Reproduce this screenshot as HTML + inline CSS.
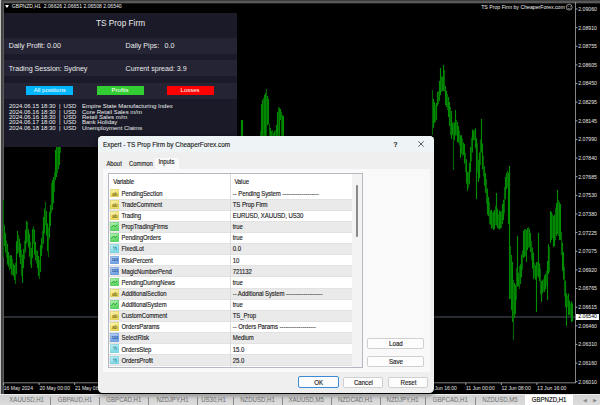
<!DOCTYPE html>
<html><head><meta charset="utf-8"><title>TS Prop Firm</title>
<style>
html,body{margin:0;padding:0;background:#000;}
body{width:600px;height:405px;position:relative;overflow:hidden;font-family:"Liberation Sans",sans-serif;color:#fff;}
div,span{box-sizing:border-box;}
.abs{position:absolute;}
#chart{position:absolute;left:0;top:0;}
.pl{position:absolute;left:578.2px;font-size:5.2px;line-height:7px;height:7px;color:#e6e6e6;white-space:nowrap;transform:scaleY(1.12);transform-origin:0 5.6px;margin-top:.9px;}
.tl{position:absolute;top:384.8px;font-size:5.05px;line-height:7px;height:7px;color:#e6e6e6;white-space:nowrap;transform:scaleY(1.12);transform-origin:0 5.6px;}
#ttl{position:absolute;left:11.8px;top:3px;font-size:5.1px;line-height:7px;color:#f0f0f0;white-space:pre;transform:scaleY(1.15);transform-origin:0 5.6px;}
#tri{position:absolute;left:4.7px;top:5px;width:0;height:0;border-left:2.3px solid transparent;border-right:2.3px solid transparent;border-top:3.1px solid #fff;}
#cr{position:absolute;right:35.2px;top:3.9px;font-size:5.2px;line-height:7px;color:#f0f0f0;white-space:nowrap;transform:scaleY(1.12);transform-origin:0 5.6px;}
#panel{position:absolute;left:4px;top:12.7px;width:232.8px;height:134px;background:#1a1a28;color:#ececec;}
#pin{position:absolute;left:0;top:-.3px;width:100%;height:100%;}
.band{position:absolute;left:0;width:100%;background:#242435;}
.pt{position:absolute;font-size:7.1px;line-height:9px;white-space:nowrap;}
.btn{position:absolute;top:73.4px;height:9.3px;font-size:6px;line-height:9.3px;text-align:center;color:#fff;}
.nw{position:absolute;left:-4px;width:240px;height:7px;font-size:6px;line-height:7px;}
.nw span{position:absolute;top:0;white-space:nowrap;}
#tabs{position:absolute;left:0;top:393.6px;width:600px;height:11.4px;background:linear-gradient(#d2d2d2,#dcdcdc);border-top:1.2px solid #ececec;font-size:6.05px;color:#707070;}
.tb{position:absolute;top:0;height:10.2px;line-height:11.6px;text-align:center;white-space:nowrap;transform:scaleY(1.16);transform-origin:50% 7.6px;}
.ts{position:absolute;top:2px;width:.8px;height:8.2px;background:#8c8c8c;}
#atab{position:absolute;left:525px;top:0;width:48.3px;height:10.2px;background:#fff;color:#111;-webkit-text-stroke:.15px #111;line-height:11.6px;text-align:center;}
#dlg{position:absolute;left:98.4px;top:136.3px;width:335.6px;height:256.4px;background:#efefef;border-radius:4.5px;overflow:hidden;color:#1a1a1a;box-shadow:0 1.5px 5px rgba(0,0,0,.5);-webkit-text-stroke:.12px #1a1a1a;}
#dt{position:absolute;left:0;top:0;width:100%;height:16.2px;background:#eef3f5;}
#dt .t{position:absolute;left:4.6px;top:4.4px;font-size:6.4px;line-height:8px;white-space:nowrap;transform:scaleY(1.15);transform-origin:0 6.6px;}
#pane{position:absolute;left:4.6px;top:32.7px;width:327px;height:202.7px;background:#f9f9f9;}
.tab{position:absolute;font-size:5.9px;line-height:8px;white-space:nowrap;color:#1a1a1a;transform:scaleY(1.2);transform-origin:0 6.4px;}
#list{position:absolute;left:10px;top:37.1px;width:254.4px;height:194.2px;background:#fff;border:.9px solid #b4b8c2;overflow:hidden;}
.rw{position:absolute;left:0;width:243px;height:11.12px;border-bottom:.6px solid #e2e2e2;background:#fff;}
.rw.g{background:#eaeaea;}
.rw span{position:absolute;white-space:nowrap;}
.nm{left:12.1px;top:1.4px;font-size:6px;line-height:8px;letter-spacing:-.08px;transform:scaleY(1.2);transform-origin:0 6.4px;}
.vl{left:123.4px;top:1.4px;font-size:6px;line-height:8px;letter-spacing:-.08px;transform:scaleY(1.2);transform-origin:0 6.4px;}
.ic{left:.9px;top:.3px;width:8.8px;height:8.6px;border-radius:1.2px;overflow:hidden;}
.ic i{-webkit-text-stroke:0;position:absolute;left:0;top:0;width:100%;text-align:center;font-style:normal;font-size:5px;line-height:8.6px;font-weight:bold;letter-spacing:-.2px;}
.ic svg{position:absolute;left:0;top:0;}
.ab{background:linear-gradient(160deg,#fcf8c0,#ecdc60 70%);box-shadow:inset 0 0 0 .4px #d6c65a;}
.ab i{color:#857420;top:.9px}
.bo{background:linear-gradient(160deg,#c4f7c4,#62d868 70%);box-shadow:inset 0 0 0 .4px #58c45e;}
.db{background:linear-gradient(160deg,#d2f6fa,#84dbe8 70%);box-shadow:inset 0 0 0 .4px #70c8d6;}
.db i{color:#2a8796;}
.in{background:linear-gradient(160deg,#c0d8f6,#78a6e4 70%);box-shadow:inset 0 0 0 .4px #6c98d6;}
.in i{color:#1d4c9c;font-size:4.2px;top:.6px}
.bx{display:inline-block;transform:scaleY(1.18);transform-origin:50% 62%;letter-spacing:-.05px;}
.hd{font-size:6px;line-height:8px;letter-spacing:-.08px;transform:scaleY(1.2);transform-origin:0 6.4px;}
.bt{position:absolute;background:#fdfdfd;border:.7px solid #d0d0d0;border-radius:2px;font-size:6.2px;text-align:center;color:#1a1a1a;white-space:nowrap;}
</style></head><body>
<svg id="chart" width="600" height="405" viewBox="0 0 600 405">
<rect x="0" y="0" width="600" height="1" fill="#3c3c3c"/>
<rect x="0" y="1" width="600" height="1" fill="#565656"/>
<rect x="0" y="2" width="600" height="1" fill="#5a5a5a"/>
<rect x="0" y="3" width="600" height=".3" fill="#666"/>
<rect x="0" y="0" width="1.25" height="405" fill="#c6c6c6"/>
<rect x="1.25" y="0.6" width="1.9" height="405" fill="#474747"/>
<rect x="3.15" y="3" width=".85" height="391" fill="#6a6a6a"/>
<rect x="4" y="316.1" width="571" height="1.7" fill="#2f353c"/>
<path d="M4.5 225.5V246.1M5.5 233.2V252.5M7.5 244.1V264.5M8.5 251.9V266.4M10.5 255.1V268.7M11.5 255.6V274.5M13.5 263.6V276.0M14.5 265.0V280.0M16.5 241.2V274.3M17.5 231.0V253.7M19.5 238.6V257.0M20.5 243.4V264.1M22.5 254.6V283.0M23.5 248.9V267.9M25.5 229.9V252.5M26.5 220.7V243.6M28.5 229.3V247.3M29.5 233.7V256.7M31.5 247.9V268.0M32.5 229.0V258.0M34.5 229.6V254.6M35.5 242.1V260.2M37.5 251.0V267.9M38.5 256.0V276.1M40.5 245.0V272.0M41.5 238.0V256.1M43.5 216.9V243.7M44.5 208.6V233.6M46.5 211.0V235.6M47.5 223.6V251.2M49.5 212.0V238.3M50.5 205.0V226.0M52.5 180.0V210.0M53.5 177.0V203.0M55.5 150.0V180.0M56.5 140.0V177.0M58.5 140.0V169.0M59.5 140.0V165.0M241.5 120.0V140.0M242.5 120.0V140.0M261.5 104.0V140.0M262.5 100.0V140.0M264.5 95.0V140.0M265.5 93.0V140.0M267.5 96.0V125.0M268.5 99.0V124.0M270.5 128.0V140.0M271.5 131.0V140.0M273.5 133.0V140.0M274.5 131.0V140.0M276.5 125.0V140.0M277.5 112.0V140.0M279.5 108.0V140.0M280.5 109.0V120.0M282.5 115.0V140.0M283.5 116.0V140.0M433.5 99.0V128.0M434.5 102.0V123.0M436.5 103.0V120.0M437.5 92.0V106.0M439.5 81.0V101.0M440.5 68.0V95.0M442.5 77.0V91.0M443.5 65.0V91.0M445.5 86.0V105.0M446.5 91.0V107.0M448.5 97.0V117.0M449.5 102.0V126.0M451.5 111.0V139.0M452.5 122.9V134.9M454.5 122.4V139.9M455.5 110.0V135.5M457.5 121.9V142.0M458.5 126.1V142.8M460.5 135.2V158.0M461.5 135.3V153.8M463.5 142.6V154.9M464.5 143.9V163.4M466.5 159.2V183.6M467.5 171.8V190.7M469.5 163.0V184.3M470.5 147.1V171.9M472.5 129.5V152.5M473.5 130.7V140.3M475.5 128.3V148.2M476.5 138.2V199.0M478.5 159.8V182.0M479.5 152.4V178.2M481.5 119.0V152.6M482.5 143.4V169.2M484.5 166.2V185.7M485.5 172.9V193.1M487.5 188.6V214.6M488.5 196.9V216.2M490.5 210.6V224.6M491.5 209.8V228.4M493.5 211.5V230.1M494.5 209.9V229.0M496.5 193.0V225.4M497.5 208.8V228.2M499.5 210.5V229.5M500.5 211.4V228.6M502.5 204.1V224.1M503.5 199.8V219.9M505.5 177.1V199.3M506.5 172.9V189.3M508.5 172.6V224.0M509.5 166.0V299.0M511.5 255.0V310.0M512.5 262.0V322.0M514.5 283.0V318.0M515.5 285.0V314.0M517.5 236.0V286.5M518.5 272.7V286.6M520.5 264.2V283.9M521.5 254.6V277.3M523.5 231.0V258.0M524.5 229.0V257.0M526.5 230.0V262.0M527.5 228.0V250.0M529.5 229.0V247.0M530.5 233.0V252.0M532.5 247.6V268.4M533.5 252.8V279.1M535.5 265.3V279.8M536.5 262.0V312.0M538.5 233.0V277.6M539.5 263.6V281.3M541.5 281.0V302.0M542.5 280.3V293.6M544.5 275.3V291.9M545.5 273.7V289.5M547.5 260.9V300.0M548.5 244.1V274.0M550.5 211.0V243.0M551.5 212.0V240.0M553.5 216.0V247.0M554.5 215.0V246.0M556.5 203.0V236.0M557.5 190.0V234.0M559.5 202.0V240.0M560.5 204.0V240.0M562.5 242.4V270.7M563.5 252.1V279.4M565.5 280.8V307.1M566.5 293.3V326.0M568.5 293.6V315.3M569.5 300.5V314.7M571.5 301.6V322.2M572.5 303.4V321.3" stroke="#008c00" stroke-width="1.15" fill="none"/><path d="M3.5 200.0V257.0M6.5 240.5V257.8M9.5 256.0V270.3M12.5 258.8V275.6M15.5 262.7V284.0M18.5 234.9V252.3M21.5 249.8V275.9M24.5 240.8V259.3M27.5 222.0V241.7M30.5 241.7V264.7M33.5 226.0V244.0M36.5 250.0V263.4M39.5 259.7V279.0M42.5 230.5V248.4M45.5 202.0V225.1M48.5 227.2V257.0M51.5 183.0V213.0M54.5 172.0V192.0M57.5 140.0V173.0M60.5 140.0V153.0M260.5 131.0V140.0M263.5 98.0V140.0M266.5 89.0V140.0M269.5 124.0V140.0M272.5 130.0V140.0M275.5 130.0V140.0M278.5 107.0V140.0M281.5 112.0V140.0M432.5 90.0V135.0M435.5 105.0V122.0M438.5 91.0V104.0M441.5 76.0V92.0M444.5 70.0V92.0M447.5 94.0V110.0M450.5 107.0V135.0M453.5 122.0V170.0M456.5 120.0V135.5M459.5 130.4V145.5M462.5 138.8V156.2M465.5 152.9V171.9M468.5 171.7V188.1M471.5 137.8V161.6M474.5 129.4V140.3M477.5 143.2V172.7M480.5 139.6V165.0M483.5 155.8V176.5M486.5 178.9V203.8M489.5 201.7V224.3M492.5 212.6V228.0M495.5 205.7V225.0M498.5 214.2V229.1M501.5 211.3V228.0M504.5 186.9V213.5M507.5 170.4V187.2M510.5 246.0V299.0M513.5 280.0V340.0M516.5 268.0V300.0M519.5 266.1V289.1M522.5 250.4V269.8M525.5 229.0V256.0M528.5 227.0V248.0M531.5 240.9V260.1M534.5 262.9V277.3M537.5 261.9V276.1M540.5 268.5V294.8M543.5 279.0V291.4M546.5 270.7V285.9M549.5 247.0V272.0M552.5 214.0V238.0M555.5 208.0V240.0M558.5 200.0V236.0M561.5 232.0V255.0M564.5 266.8V296.4M567.5 295.7V307.3M570.5 303.5V316.2" stroke="#006400" stroke-width="1.15" fill="none"/>

<path d="M575.5 2V383M3.4 382.8H576" stroke="#9c9c9c" stroke-width=".85" fill="none"/>
<path d="M575.5 9.0h2M575.5 27.6h2M575.5 46.3h2M575.5 64.9h2M575.5 83.5h2M575.5 102.2h2M575.5 120.8h2M575.5 139.4h2M575.5 158.1h2M575.5 176.7h2M575.5 195.4h2M575.5 214.0h2M575.5 232.6h2M575.5 251.3h2M575.5 269.9h2M575.5 288.5h2M575.5 307.2h2M575.5 325.8h2M575.5 344.4h2M575.5 363.1h2M575.5 381.7h2M3.6 383v2M39.1 383v2M74.7 383v2M110.2 383v2M145.8 383v2M181.3 383v2M216.9 383v2M252.4 383v2M288.0 383v2M323.6 383v2M359.1 383v2M394.6 383v2M430.2 383v2M465.8 383v2M501.3 383v2M536.9 383v2" stroke="#c8c8c8" stroke-width=".8" fill="none"/>
<circle cx="569.2" cy="7.2" r="2.9" fill="none" stroke="#e8e8e8" stroke-width=".6"/>
<path d="M567.7 8.1Q569.2 9.6 570.7 8.1" stroke="#e8e8e8" stroke-width=".5" fill="none"/>
<circle cx="568.2" cy="6.4" r=".45" fill="#e8e8e8"/><circle cx="570.2" cy="6.4" r=".45" fill="#e8e8e8"/>
</svg>
<div id="tri"></div>
<div id="ttl">GBPNZD,H1  2.06626 2.06651 2.06508 2.06540</div>
<div id="cr">TS Prop Firm by CheaperForex.com</div>
<div class="pl" style="top:5.1px">2.09060</div><div class="pl" style="top:23.7px">2.08910</div><div class="pl" style="top:42.4px">2.08755</div><div class="pl" style="top:61.0px">2.08605</div><div class="pl" style="top:79.6px">2.08450</div><div class="pl" style="top:98.3px">2.08295</div><div class="pl" style="top:116.9px">2.08145</div><div class="pl" style="top:135.5px">2.07990</div><div class="pl" style="top:154.2px">2.07840</div><div class="pl" style="top:172.8px">2.07685</div><div class="pl" style="top:191.5px">2.07530</div><div class="pl" style="top:210.1px">2.07380</div><div class="pl" style="top:228.7px">2.07225</div><div class="pl" style="top:247.4px">2.07075</div><div class="pl" style="top:266.0px">2.06920</div><div class="pl" style="top:284.6px">2.06765</div><div class="pl" style="top:303.3px">2.06615</div><div class="pl" style="top:321.9px">2.06460</div><div class="pl" style="top:340.5px">2.06310</div><div class="pl" style="top:359.2px">2.06160</div><div class="pl" style="top:377.8px">2.06010</div>
<div class="abs" style="left:575.9px;top:314px;width:22.9px;height:5.8px;background:#fff;"></div>
<div class="pl" style="top:312.6px;color:#000">2.06540</div>
<div class="tl" style="left:3.8px">16 May 2024</div><div class="tl" style="left:39.4px">20 May 00:00</div><div class="tl" style="left:74.9px">21 May 08:00</div><div class="tl" style="left:110.4px">22 May 16:00</div><div class="tl" style="left:146.0px">24 May 00:00</div><div class="tl" style="left:181.5px">27 May 08:00</div><div class="tl" style="left:217.1px">28 May 16:00</div><div class="tl" style="left:252.6px">30 May 00:00</div><div class="tl" style="left:288.2px">31 May 08:00</div><div class="tl" style="left:323.8px">3 Jun 16:00</div><div class="tl" style="left:359.3px">5 Jun 00:00</div><div class="tl" style="left:394.8px">6 Jun 08:00</div><div class="tl" style="left:430.4px">7 Jun 16:00</div><div class="tl" style="left:465.9px">11 Jun 00:00</div><div class="tl" style="left:501.5px">12 Jun 08:00</div><div class="tl" style="left:537.1px">13 Jun 16:00</div>
<div id="panel"><div id="pin">
<div class="band" style="top:25.3px;height:16px"></div>
<div class="band" style="top:47.4px;height:16.6px"></div>
<div class="band" style="top:70.3px;height:16.2px"></div>
<div class="pt" style="left:92px;top:6.2px;font-size:8.25px;line-height:10px">TS Prop Firm</div>
<div class="pt" style="left:4.8px;top:29.7px">Daily Profit: 0.00</div>
<div class="pt" style="left:121.6px;top:29.7px">Daily Pips:&nbsp;&nbsp;&thinsp;0.0</div>
<div class="pt" style="left:4.8px;top:52.3px">Trading Session: Sydney</div>
<div class="pt" style="left:121.6px;top:52.3px">Current spread: 3.9</div>
<div class="btn" style="left:22.3px;width:47px;background:#00b6ff">All positions</div>
<div class="btn" style="left:92.6px;width:47px;background:#32cd32">Profits</div>
<div class="btn" style="left:162.6px;width:47px;background:#ff0000">Losses</div>
<div class="nw" style="top:90.70px"><span style="left:9px">2024.06.15 18:30</span><span style="left:59px">|</span><span style="left:63.6px">USD</span><span style="left:82px">Empire State Manufacturing Index</span></div><div class="nw" style="top:96.13px"><span style="left:9px">2024.06.16 18:30</span><span style="left:59px">|</span><span style="left:63.6px">USD</span><span style="left:82px">Core Retail Sales m/m</span></div><div class="nw" style="top:101.56px"><span style="left:9px">2024.06.16 18:30</span><span style="left:59px">|</span><span style="left:63.6px">USD</span><span style="left:82px">Retail Sales m/m</span></div><div class="nw" style="top:106.99px"><span style="left:9px">2024.06.17 18:00</span><span style="left:59px">|</span><span style="left:63.6px">USD</span><span style="left:82px">Bank Holiday</span></div><div class="nw" style="top:112.42px"><span style="left:9px">2024.06.18 18:30</span><span style="left:59px">|</span><span style="left:63.6px">USD</span><span style="left:82px">Unemployment Claims</span></div>
</div></div>
<div id="tabs"><div class="tb" style="left:4.3px;width:44.7px">XAUUSD,H1</div><div class="ts" style="left:50.3px"></div><div class="tb" style="left:52.3px;width:45.4px">GBPAUD,H1</div><div class="ts" style="left:98.6px"></div><div class="tb" style="left:101.0px;width:45.7px">GBPCAD,H1</div><div class="ts" style="left:147.9px"></div><div class="tb" style="left:150.0px;width:45.0px">NZDJPY,H1</div><div class="ts" style="left:196.6px"></div><div class="tb" style="left:196.0px;width:35.0px">US30,H1</div><div class="ts" style="left:232.9px"></div><div class="tb" style="left:235.0px;width:45.0px">NZDUSD,H1</div><div class="ts" style="left:281.9px"></div><div class="tb" style="left:283.3px;width:45.7px">XAUUSD,M5</div><div class="ts" style="left:330.6px"></div><div class="tb" style="left:332.3px;width:46.0px">NZDCAD,H1</div><div class="ts" style="left:379.6px"></div><div class="tb" style="left:381.0px;width:43.3px">NZDJPY,H1</div><div class="ts" style="left:425.3px"></div><div class="tb" style="left:427.3px;width:46.0px">GBPCAD,H1</div><div class="ts" style="left:474.6px"></div><div class="tb" style="left:476.7px;width:46.6px">NZDUSD,M5</div><div id="atab"><span style="display:inline-block;transform:scaleY(1.16);transform-origin:50% 7.6px">GBPNZD,H1</span></div>
<div class="abs" style="left:583px;top:1.6px;font-size:5px;line-height:8px;color:#8a8a8a">&#9664;</div>
<div class="abs" style="left:593px;top:1.6px;font-size:5px;line-height:8px;color:#8a8a8a">&#9654;</div>
</div>
<div id="dlg">
<div id="dt"><div class="t">Expert - TS Prop Firm by CheaperForex.com</div>
<div class="abs" style="left:295px;top:4.5px;font-size:6.6px;line-height:8px;font-weight:bold;color:#333">?</div>
<svg class="abs" style="left:319.4px;top:5px" width="6" height="6" viewBox="0 0 6 6"><path d="M.3 .3L5.7 5.7M5.7 .3L.3 5.7" stroke="#222" stroke-width=".7"/></svg>
</div>
<div id="pane"></div>
<div class="abs" style="left:56.6px;top:21.4px;width:24px;height:11.5px;background:#f9f9f9;border-radius:1.5px 1.5px 0 0"></div>
<div class="tab" style="left:8px;top:23.4px">About</div>
<div class="tab" style="left:30.6px;top:23.4px">Common</div>
<div class="tab" style="left:60px;top:22.2px">Inputs</div>
<div id="list">
<div class="abs hd" style="left:3.8px;top:3.3px">Variable</div>
<div class="abs hd" style="left:125px;top:3.3px">Value</div>
<div class="rw" style="top:14.10px"><span class="ic ab"><i>ab</i></span><span class="nm">PendingSection</span><span class="vl">-- Pending System -------------------</span></div><div class="rw g" style="top:25.22px"><span class="ic ab"><i>ab</i></span><span class="nm">TradeComment</span><span class="vl">TS Prop Firm</span></div><div class="rw" style="top:36.34px"><span class="ic ab"><i>ab</i></span><span class="nm">Trading</span><span class="vl">EURUSD, XAUUSD, US30</span></div><div class="rw g" style="top:47.46px"><span class="ic bo"><svg viewBox="0 0 9 9" width="8.6" height="8.6"><path d="M1.5 6L3.5 3.5L5.5 5L7.5 3" stroke="#1f8f2c" stroke-width=".9" fill="none"/></svg></span><span class="nm">PropTradingFirms</span><span class="vl">true</span></div><div class="rw" style="top:58.58px"><span class="ic bo"><svg viewBox="0 0 9 9" width="8.6" height="8.6"><path d="M1.5 6L3.5 3.5L5.5 5L7.5 3" stroke="#1f8f2c" stroke-width=".9" fill="none"/></svg></span><span class="nm">PendingOrders</span><span class="vl">true</span></div><div class="rw g" style="top:69.70px"><span class="ic db"><i>&#189;</i></span><span class="nm">FixedLot</span><span class="vl">0.0</span></div><div class="rw" style="top:80.82px"><span class="ic in"><i>123</i></span><span class="nm">RiskPercent</span><span class="vl">10</span></div><div class="rw g" style="top:91.94px"><span class="ic in"><i>123</i></span><span class="nm">MagicNumberPend</span><span class="vl">721132</span></div><div class="rw" style="top:103.06px"><span class="ic bo"><svg viewBox="0 0 9 9" width="8.6" height="8.6"><path d="M1.5 6L3.5 3.5L5.5 5L7.5 3" stroke="#1f8f2c" stroke-width=".9" fill="none"/></svg></span><span class="nm">PendingDuringNews</span><span class="vl">true</span></div><div class="rw g" style="top:114.18px"><span class="ic ab"><i>ab</i></span><span class="nm">AdditionalSection</span><span class="vl">-- Additional System -------------------</span></div><div class="rw" style="top:125.30px"><span class="ic bo"><svg viewBox="0 0 9 9" width="8.6" height="8.6"><path d="M1.5 6L3.5 3.5L5.5 5L7.5 3" stroke="#1f8f2c" stroke-width=".9" fill="none"/></svg></span><span class="nm">AdditionalSystem</span><span class="vl">true</span></div><div class="rw g" style="top:136.42px"><span class="ic ab"><i>ab</i></span><span class="nm">CustomComment</span><span class="vl">TS_Prop</span></div><div class="rw" style="top:147.54px"><span class="ic ab"><i>ab</i></span><span class="nm">OrdersParams</span><span class="vl">-- Orders Params -------------------</span></div><div class="rw g" style="top:158.66px"><span class="ic in"><i>123</i></span><span class="nm">SelectRisk</span><span class="vl">Medium</span></div><div class="rw" style="top:169.78px"><span class="ic db"><i>&#189;</i></span><span class="nm">OrdersStep</span><span class="vl">15.0</span></div><div class="rw g" style="top:180.90px"><span class="ic db"><i>&#189;</i></span><span class="nm">OrdersProfit</span><span class="vl">25.0</span></div>
<div class="abs" style="left:120.8px;top:0;width:.7px;height:194px;background:#dcdcdc"></div>
<div class="abs" style="left:243px;top:0;width:11px;height:194px;background:#f3f3f3"></div>
<div class="abs" style="left:247.1px;top:10.2px;width:1.5px;height:52.5px;background:#8a8a8a;border-radius:.7px"></div>
</div>
<div class="bt" style="left:269px;top:201.3px;width:57px;height:11px;line-height:9.8px"><span class="bx">Load</span></div>
<div class="bt" style="left:269px;top:219.6px;width:57px;height:11px;line-height:9.8px"><span class="bx">Save</span></div>
<div class="bt" style="left:199.9px;top:240.2px;width:40.8px;height:11.6px;line-height:12px;border-color:#3a8ad8;border-width:.9px"><span class="bx">OK</span></div>
<div class="bt" style="left:244.9px;top:240.4px;width:40.2px;height:11.2px;line-height:10px"><span class="bx">Cancel</span></div>
<div class="bt" style="left:290.1px;top:240.4px;width:40px;height:11.2px;line-height:10px"><span class="bx">Reset</span></div>
</div>
</body></html>
